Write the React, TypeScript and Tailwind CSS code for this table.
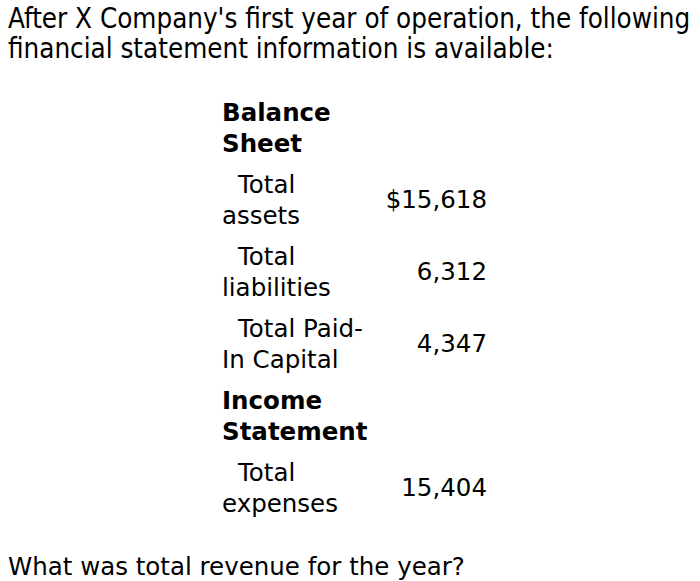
export default function App() {
  const rows = [
    { label: ["Total", "assets"], value: "$15,618" },
    { label: ["Total", "liabilities"], value: "6,312" },
    { label: ["Total Paid-", "In Capital"], value: "4,347" },
  ];
  return (
    <main className="w-[700px] h-[581px] bg-white text-black overflow-hidden">
      <p
        className="pl-2 pt-[3px] text-[27.5px] leading-[30px]"
        style={{ fontFamily: '"DejaVu Sans Condensed", "DejaVu Sans", sans-serif' }}
      >
        After X Company's first year of operation, the following financial statement information is available:
      </p>

      <div className="pl-[222px] pt-[29px] text-[24.5px] leading-[31.5px]" style={{ fontFamily: '"DejaVu Sans", Verdana, sans-serif' }}>
        <div className="w-[265px]">
          <div className="font-bold w-[160px] py-[4.5px]">Balance Sheet</div>
          {rows.map((r) => (
            <div key={r.value} className="flex items-center justify-between py-[4.5px]">
              <div className="w-[160px]">
                <div className="pl-4">{r.label[0]}</div>
                <div>{r.label[1]}</div>
              </div>
              <div>{r.value}</div>
            </div>
          ))}
          <div className="font-bold w-[160px] py-[4.5px]">Income Statement</div>
          <div className="flex items-center justify-between py-[4.5px]">
            <div className="w-[160px]">
              <div className="pl-4">Total</div>
              <div>expenses</div>
            </div>
            <div>15,404</div>
          </div>
        </div>
      </div>

      <p className="pl-2 pt-[27px] text-[24.5px] leading-[32px]" style={{ fontFamily: '"DejaVu Sans", Verdana, sans-serif' }}>
        What was total revenue for the year?
      </p>
    </main>
  );
}
